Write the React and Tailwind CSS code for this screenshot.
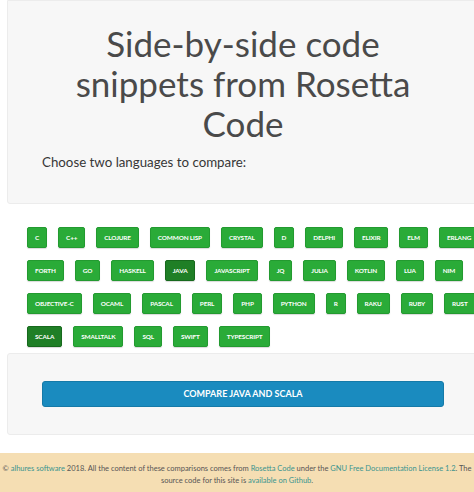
const languages = [
  'C', 'C++', 'Clojure', 'Common Lisp', 'Crystal', 'D', 'Delphi', 'Elixir', 'Elm', 'Erlang',
  'Forth', 'Go', 'Haskell', 'Java', 'JavaScript', 'jq', 'Julia', 'Kotlin', 'Lua', 'Nim',
  'Objective-C', 'OCaml', 'Pascal', 'Perl', 'PHP', 'Python', 'R', 'Raku', 'Ruby', 'Rust',
  'Scala', 'Smalltalk', 'SQL', 'Swift', 'TypeScript',
];

const selected = ['Java', 'Scala'];

function LanguageButton({ name, active }) {
  return (
    <button
      type="button"
      className={`flex h-[21px] items-center rounded-[2px] border px-[7px] text-[6.4px] font-bold uppercase tracking-[-0.15px] text-white shadow-[0_1px_1px_rgba(0,0,0,0.15)] ${
        active ? 'border-[#17691d] bg-[#1f7f26]' : 'border-[#239a30] bg-[#2aab38]'
      }`}
    >
      {name}
    </button>
  );
}

export default function App() {
  return (
    <div className="min-h-screen bg-white font-['Lato',sans-serif]">
      <section className="ml-[7px] w-[472px] rounded-b-[3px] border border-[#ececec] bg-[#f7f7f7] px-[34px] pb-[31px] pt-[22px]">
        <h1 className="text-center text-[35px] leading-[40px] text-[#4a4a4a]">
          Side-by-side code snippets from Rosetta Code
        </h1>
        <p className="mt-[9px] text-[13.3px] leading-[20px] text-[#363636]">Choose two languages to compare:</p>
      </section>

      <div className="ml-[27px] mt-[23px] flex w-[470px] flex-wrap gap-x-[11px] gap-y-[12px]">
        {languages.map((lang) => (
          <LanguageButton key={lang} name={lang} active={selected.includes(lang)} />
        ))}
      </div>

      <section className="ml-[7px] mt-[6px] w-[472px] rounded-[3px] border border-[#ececec] bg-[#f7f7f7] px-[34px] py-[27px]">
        <button
          type="button"
          className="flex h-[26px] w-full items-center justify-center rounded-[3px] border border-[#157aa8] bg-[#1a8bbf] text-[9px] font-bold uppercase text-white"
        >
          Compare Java and Scala
        </button>
      </section>

      <footer className="mt-[18px] bg-[#f5deb3] pb-[8px] pt-[10px] text-center text-[7.5px] leading-[12px] text-[#555]">
        © <a className="text-[#3a948f]">alhures software</a> 2018. All the content of these comparisons comes from{' '}
        <a className="text-[#3a948f]">Rosetta Code</a> under the{' '}
        <a className="text-[#3a948f]">GNU Free Documentation License 1.2</a>. The source code for this site is{' '}
        <a className="text-[#3a948f]">available on Github</a>.
      </footer>
    </div>
  );
}
